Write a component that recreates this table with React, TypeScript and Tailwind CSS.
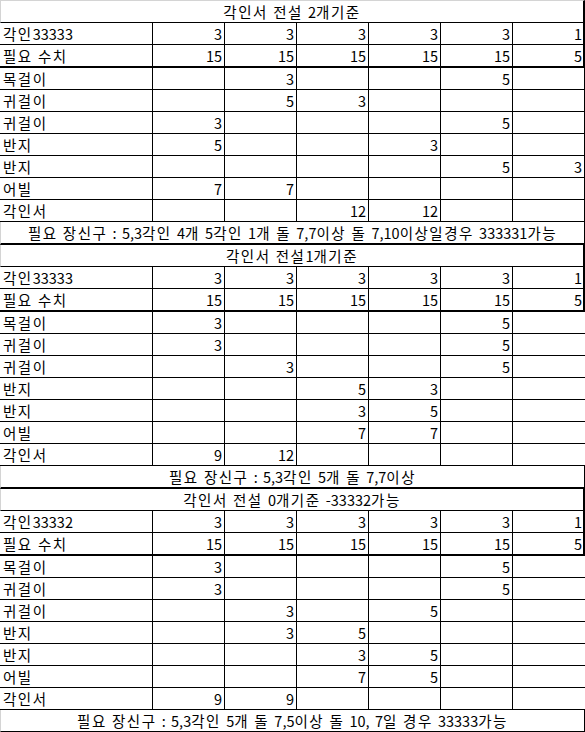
import React from 'react';

type Cell = number | null;

type Block = {
  title: string;
  first?: boolean;
  last?: boolean;
  itemBorder: boolean;
  head: string;
  items: { label: string; values: Cell[] }[];
  footer: string;
};

const blocks: Block[] = [
  {
    title: '각인서 전설 2개기준',
    first: true,
    itemBorder: true,
    head: '각인33333',
    items: [
      { label: '목걸이', values: [null, 3, null, null, 5, null] },
      { label: '귀걸이', values: [null, 5, 3, null, null, null] },
      { label: '귀걸이', values: [3, null, null, null, 5, null] },
      { label: '반지', values: [5, null, null, 3, null, null] },
      { label: '반지', values: [null, null, null, null, 5, 3] },
      { label: '어빌', values: [7, 7, null, null, null, null] },
      { label: '각인서', values: [null, null, 12, 12, null, null] },
    ],
    footer: '필요 장신구 : 5,3각인 4개 5각인 1개 돌 7,7이상 돌 7,10이상일경우 333331가능',
  },
  {
    title: '각인서 전설1개기준',
    itemBorder: false,
    head: '각인33333',
    items: [
      { label: '목걸이', values: [3, null, null, null, 5, null] },
      { label: '귀걸이', values: [3, null, null, null, 5, null] },
      { label: '귀걸이', values: [null, 3, null, null, 5, null] },
      { label: '반지', values: [null, null, 5, 3, null, null] },
      { label: '반지', values: [null, null, 3, 5, null, null] },
      { label: '어빌', values: [null, null, 7, 7, null, null] },
      { label: '각인서', values: [9, 12, null, null, null, null] },
    ],
    footer: '필요 장신구 : 5,3각인 5개 돌 7,7이상',
  },
  {
    title: '각인서 전설 0개기준 -33332가능',
    last: true,
    itemBorder: false,
    head: '각인33332',
    items: [
      { label: '목걸이', values: [3, null, null, null, 5, null] },
      { label: '귀걸이', values: [3, null, null, null, 5, null] },
      { label: '귀걸이', values: [null, 3, null, 5, null, null] },
      { label: '반지', values: [null, 3, 5, null, null, null] },
      { label: '반지', values: [null, null, 3, 5, null, null] },
      { label: '어빌', values: [null, null, 7, 5, null, null] },
      { label: '각인서', values: [9, 9, null, null, null, null] },
    ],
    footer: '필요 장신구 : 5,3각인 5개 돌 7,5이상 돌 10, 7일 경우 33333가능',
  },
];

// Hangul runs get a bit of extra tracking so widths come closer to the original sheet font
function KText({ text }: { text: string }) {
  const parts = text.split(/([\uac00-\ud7a3]+)/);
  return (
    <>
      {parts.map((p, i) =>
        /[\uac00-\ud7a3]/.test(p) ? (
          <span key={i} className="tracking-[1.5px]">
            {p}
          </span>
        ) : (
          <span key={i}>{p}</span>
        ),
      )}
    </>
  );
}

function DataRow({
  label,
  values,
  thick,
  edge,
}: {
  label: string;
  values: Cell[];
  thick?: boolean;
  edge: 'thick' | 'thin' | 'none';
}) {
  return (
    <div className={thick ? 'flex h-[23px] border-b-2 border-black' : 'flex h-[22px] border-b border-black'}>
      <div className="w-[153px] shrink-0 border-r border-black pl-[3px] leading-[21px] [word-spacing:2px]">
        <KText text={label} />
      </div>
      {values.map((v, i) => {
        const lastCol = i === values.length - 1;
        let cls = 'w-[72px] shrink-0 border-r border-black pr-[2px] text-right leading-[21px]';
        if (lastCol && edge === 'thick') cls = 'w-[72px] shrink-0 border-r-2 border-black pr-[1px] text-right leading-[21px]';
        if (lastCol && edge === 'none') cls = 'w-[72px] shrink-0 pr-[3px] text-right leading-[21px]';
        return (
          <div key={i} className={cls}>
            {v ?? ''}
          </div>
        );
      })}
    </div>
  );
}

function Section({ block }: { block: Block }) {
  return (
    <div>
      {/* title */}
      <div
        className={
          block.first
            ? 'h-[23px] border-t border-t-[#d4d4d4] border-l border-l-[#d4d4d4] border-b border-b-black border-r-2 border-r-black text-center leading-[21px] [word-spacing:2px]'
            : 'h-[22px] border-l border-l-[#d4d4d4] border-b border-b-black border-r-2 border-r-black text-center leading-[21px] [word-spacing:2px]'
        }
      >
        <KText text={block.title} />
      </div>

      <DataRow label={block.head} values={[3, 3, 3, 3, 3, 1]} edge="thick" />
      <DataRow label="필요 수치" values={[15, 15, 15, 15, 15, 5]} edge="thick" thick />

      {block.items.map((it, i) => (
        <DataRow key={i} label={it.label} values={it.values} edge={block.itemBorder ? 'thin' : 'none'} />
      ))}

      {/* footer */}
      <div
        className={
          block.last
            ? 'h-[22px] border-l border-l-[#d4d4d4] border-b border-b-black border-r border-r-black text-center leading-[21px] [word-spacing:2px] whitespace-nowrap'
            : 'h-[23px] border-l border-l-[#d4d4d4] border-b-2 border-b-black border-r border-r-black text-center leading-[21px] [word-spacing:2px] whitespace-nowrap'
        }
      >
        <KText text={block.footer} />
      </div>
    </div>
  );
}

export default function App() {
  return (
    <div className="w-[585px] bg-white text-[14.5px] text-black font-['Noto_Sans_CJK_KR','Malgun_Gothic',sans-serif]">
      {blocks.map((b) => (
        <Section key={b.title} block={b} />
      ))}
    </div>
  );
}
